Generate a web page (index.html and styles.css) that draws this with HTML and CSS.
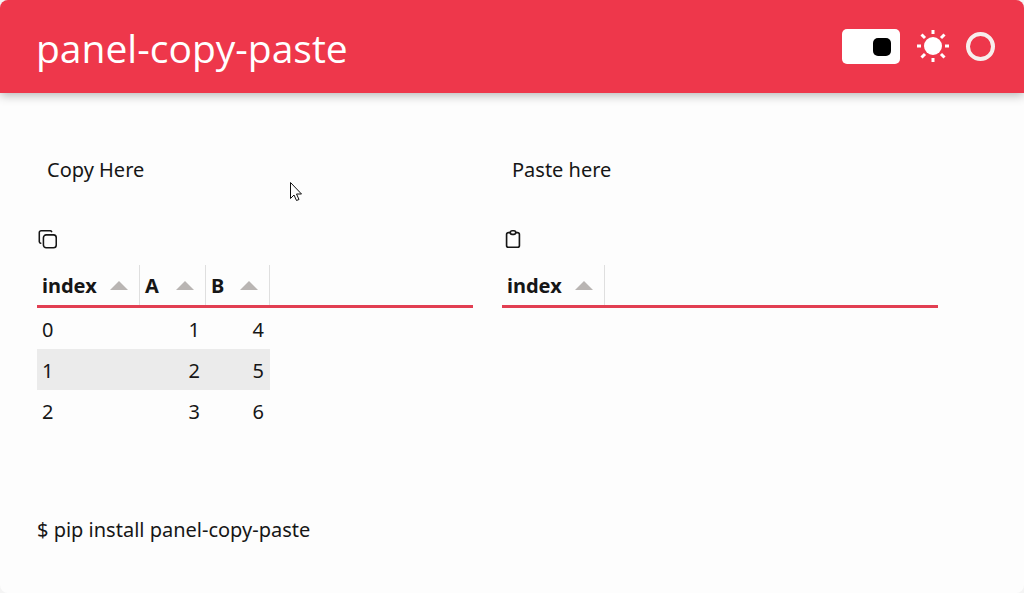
FILE: index.html
```html
<!DOCTYPE html>
<html lang="en">

<head>
    <meta charset="UTF-8" />
    <meta name="viewport" content="width=device-width, initial-scale=1" />
    <title>panel-copy-paste</title>
    <link rel="stylesheet" href="styles.css">
</head>
<body>
    <div class="page">
        <header class="header">
            <a href="#" class="title">panel-copy-paste</a>
            <div class="header-tools">
                <input type="checkbox" class="theme-switch" id="themeSwitch" aria-label="Toggle theme" checked>
                <label for="themeSwitch" class="theme-icon">
                    <svg width="34" height="34" viewBox="0 0 34 34" fill="#fff" stroke="#fff" stroke-width="3">
                        <circle cx="17" cy="16" r="9" stroke="none" />
                        <path d="M17 0v4M17 28v4M1 16h4M29 16h4M5.5 4.500l3.500 3.500M25 24l3.500 3.500M5.500 27.500l3.500-3.500M25 8l3.500-3.500" />
                    </svg>
                </label>
                <div class="busy-indicator"></div>
            </div>
        </header>

        <main class="content">
            <div class="columns">
                <section class="column">
                    <p class="label">Copy Here</p>
                    <button class="icon-button" aria-label="Copy">
                        <svg width="22" height="22" viewBox="0 0 24 24" fill="none" stroke="currentColor" stroke-width="1.700" stroke-linecap="round" stroke-linejoin="round">
                            <rect x="7" y="7.500" width="14" height="14" rx="3"></rect>
                            <path d="M4 16.700a2 2 0 0 1-1.500-1.700V5a2 2 0 0 1 2-2h10c.75 0 1.160.390 1.500 1"></path>
                        </svg>
                    </button>
                    <table class="grid">
                        <thead>
                            <tr>
                                <th class="col-index"><div class="head">index<span class="arrow"></span></div></th>
                                <th class="col-a"><div class="head">A<span class="arrow"></span></div></th>
                                <th class="col-b"><div class="head">B<span class="arrow"></span></div></th>
                                <td></td>
                            </tr>
                        </thead>
                        <tbody>
                            <tr>
                                <td>0</td>
                                <td class="number">1</td>
                                <td class="number">4</td>
                                <td class="filler"></td>
                            </tr>
                            <tr>
                                <td>1</td>
                                <td class="number">2</td>
                                <td class="number">5</td>
                                <td class="filler"></td>
                            </tr>
                            <tr>
                                <td>2</td>
                                <td class="number">3</td>
                                <td class="number">6</td>
                                <td class="filler"></td>
                            </tr>
                        </tbody>
                    </table>
                </section>

                <section class="column">
                    <p class="label">Paste here</p>
                    <button class="icon-button" aria-label="Paste">
                        <svg width="22" height="22" viewBox="0 0 24 24" fill="none" stroke="currentColor" stroke-width="1.800" stroke-linecap="round" stroke-linejoin="round">
                            <path d="M9 5H7a2 2 0 0 0-2 2v12a2 2 0 0 0 2 2h10a2 2 0 0 0 2-2V7a2 2 0 0 0-2-2h-2"></path>
                            <rect x="9" y="3" width="6" height="4" rx="2"></rect>
                        </svg>
                    </button>
                    <table class="grid">
                        <thead>
                            <tr>
                                <th class="col-index"><div class="head">index<span class="arrow"></span></div></th>
                                <td></td>
                            </tr>
                        </thead>
                    </table>
                </section>
            </div>

            <p class="install">$ pip install panel-copy-paste</p>
        </main>

        <svg class="pointer" width="12" height="20" viewBox="0 0 12 20" fill="#fff" stroke="#111" stroke-width="1">
            <path d="M.5.5v16l3.500-3.500 2.500 5.500 2.500-1-2.500-5.500h5z" />
        </svg>
    </div>
</body>
</html>
```
FILE: styles.css
```css
body {
    margin: 0;
    font-family: 'Noto Sans', 'Open Sans', sans-serif;
    font-size: 20px;
    color: #161616;
    background: #f4f4f4;
}

.page {
    position: relative;
    min-height: 100vh;
    background: #fdfdfd;
    border-radius: 8px;
    overflow: hidden;
}

.header {
    display: flex;
    align-items: center;
    justify-content: space-between;
    height: 93px;
    padding: 0 29px 0 36px;
    background: #ee374b;
    box-shadow: 0 2px 10px rgba(0, 0, 0, 0.3);
}

.title {
    padding-top: 2px;
    font-family: 'Open Sans', sans-serif;
    font-size: 39px;
    line-height: 56px;
    color: #fff;
    text-decoration: none;
}

.header-tools {
    display: flex;
    align-items: center;
    gap: 16px;
}

.theme-switch {
    appearance: none;
    display: flex;
    align-items: center;
    justify-content: flex-end;
    width: 58px;
    height: 35px;
    margin: 0;
    padding: 0 9px;
    box-sizing: border-box;
    background: #fff;
    border-radius: 5px;
}

.theme-switch::before {
    content: "";
    width: 18px;
    height: 18px;
    background: #000;
    border-radius: 5px;
}

.theme-icon {
    display: flex;
}

.busy-indicator {
    width: 21px;
    height: 21px;
    border: 4px solid #f7eeec;
    border-radius: 50%;
}

.content {
    padding: 61px 86px 40px 37px;
}

.columns {
    display: grid;
    grid-template-columns: 1fr 1fr;
    gap: 29px;
    min-height: 361px;
}

.label {
    margin: 0 0 42px;
    padding: 0 10px;
    line-height: 32px;
}

.icon-button {
    display: flex;
    padding: 0;
    margin-bottom: 15px;
    color: #161616;
    background: none;
    border: none;
}

.grid {
    width: 100%;
    table-layout: fixed;
    border-collapse: separate;
    border-spacing: 0;
}

.grid th,
.grid td {
    height: 41px;
    padding: 2px 5px 0;
    box-sizing: border-box;
    text-align: left;
}

.grid thead th,
.grid thead td {
    height: 43px;
    padding-top: 0;
    border-bottom: 3px solid #e23f52;
}

.grid .col-index {
    width: 103px;
}

.grid .col-a {
    width: 66px;
}

.grid .col-b {
    width: 64px;
}

.head {
    display: flex;
    align-items: center;
    justify-content: space-between;
    height: 40px;
    margin-right: -5px;
    padding-right: 11px;
    border-right: 1px solid #dfdfdf;
}

.arrow {
    border: 9px solid transparent;
    border-top: none;
    border-bottom: 9px solid #b9b5b3;
}

.grid .number {
    padding-right: 6px;
    text-align: right;
}

.grid tbody tr:nth-child(even) td:not(.filler) {
    background: #ebebeb;
}

.install {
    margin: 0;
    line-height: 30px;
}

.pointer {
    position: absolute;
    top: 182px;
    left: 290px;
}
```
